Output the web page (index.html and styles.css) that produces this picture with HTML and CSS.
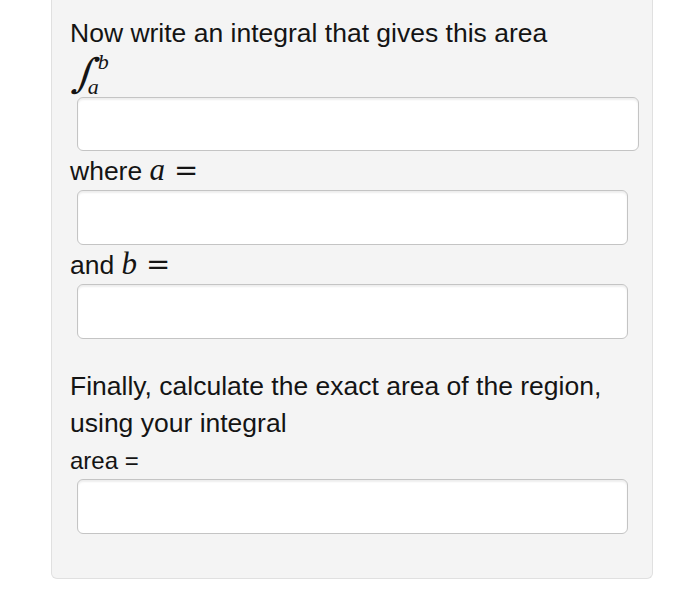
FILE: index.html
```html
<!DOCTYPE html>
<html>
<head>
<meta charset="utf-8">
<link rel="stylesheet" href="styles.css">
</head>
<body>
<div class="panel">
  <p class="line">Now write an integral that gives this area</p>
  <div class="integral"><span class="int">∫</span><span class="limits"><span class="up">b</span><span class="lo">a</span></span></div>
  <div class="field wide"></div>
  <p class="line label">where <span class="mi">a</span><span class="mo">=</span></p>
  <div class="field"></div>
  <p class="line label">and <span class="mi">b</span><span class="mo">=</span></p>
  <div class="field"></div>
  <p class="para">Finally, calculate the exact area of the region, using your integral</p>
  <p class="area">area =</p>
  <div class="field"></div>
</div>
</body>
</html>
```
FILE: styles.css
```css
html, body {
  margin: 0;
  padding: 0;
  background: #ffffff;
}
body {
  font-family: "Liberation Sans", Arial, sans-serif;
  color: #141414;
}
.panel {
  box-sizing: border-box;
  width: 602px;
  margin-left: 51px;
  height: 579px;
  background: #f4f4f4;
  border: 1px solid #e0e0e0;
  border-top: none;
  border-radius: 0 0 6px 6px;
  padding: 18px 0 0 18px;
  display: flex;
  flex-direction: column;
  align-items: flex-start;
}
.line {
  margin: 0;
  font-size: 26.5px;
  line-height: 30px;
  white-space: nowrap;
}
.integral {
  display: flex;
  align-items: flex-start;
  height: 49px;
  overflow: visible;
}
.int {
  display: block;
  font-family: "DejaVu Serif", serif;
  font-size: 40px;
  line-height: 40px;
  margin-top: 5px;
  transform: skewX(-16deg);
  transform-origin: 50% 100%;
}
.limits {
  display: flex;
  flex-direction: column;
  margin-left: 2px;
  font-family: "Liberation Serif", serif;
  font-style: italic;
}
.up {
  font-size: 22px;
  line-height: 22px;
  margin-top: 3px;
  margin-left: 5px;
}
.lo {
  font-size: 22px;
  line-height: 22px;
  margin-top: 3px;
  margin-left: -5px;
}
.field {
  box-sizing: border-box;
  flex: none;
  width: 551px;
  height: 55px;
  margin-left: 7px;
  background: #ffffff;
  border: 1px solid #c4c4c4;
  border-radius: 6px;
  box-shadow: inset 0 2px 2px rgba(0, 0, 0, 0.07);
}
.field.wide {
  width: 562px;
  height: 54px;
}
.label {
  margin-top: 5px;
  margin-bottom: 4px;
}
.mi {
  font-family: "Liberation Serif", serif;
  font-style: italic;
  font-size: 31px;
  line-height: 0;
}
.mo {
  font-family: "DejaVu Serif", serif;
  font-size: 29px;
  line-height: 0;
  margin-left: 9px;
}
.para {
  margin: 29px 0 0 0;
  width: 560px;
  font-size: 26.5px;
  line-height: 37px;
}
.area {
  margin: 0;
  font-size: 24px;
  line-height: 37px;
}
```
